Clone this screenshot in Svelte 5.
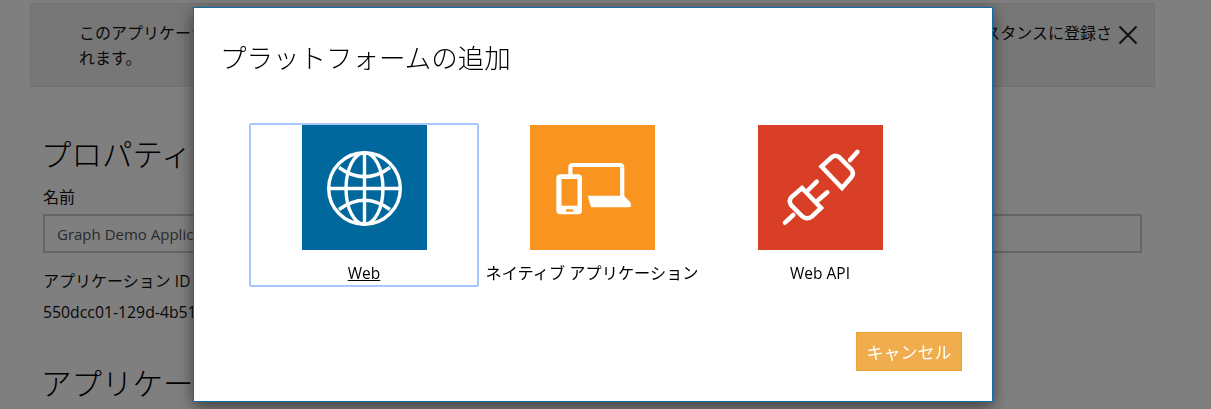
<script>
  const platforms = [
    { name: 'Web', cls: 'web', focused: true },
    { name: 'ネイティブ アプリケーション', cls: 'native' },
    { name: 'Web API', cls: 'api' }
  ]
</script>

<div class="page">
  <div class="alert">
    <p>このアプリケーションは、アプリケーションを追加したすべてのユーザーが所属している組織内の Azure Active Directory インスタンスに登録されます。</p>
    <svg class="close" viewBox="0 0 20 20" width="20" height="20" aria-hidden="true">
      <path d="M1.500 1.500 18.500 18.500M18.500 1.500 1.500 18.500" />
    </svg>
  </div>

  <section class="props">
    <h2>プロパティ</h2>
    <label for="name">名前</label>
    <input id="name" type="text" value="Graph Demo Application" />
    <div class="field-label">アプリケーション <span class="latin">ID</span></div>
    <div class="field-value">550dcc01-129d-4b51-a6f2-7c3e90d1b884</div>
    <h2 class="second">アプリケーション シークレット</h2>
  </section>
</div>

<div class="overlay">
  <div class="modal">
    <h3>プラットフォームの追加</h3>

    <div class="tiles">
      {#each platforms as p}
        <a class="tile" class:focused={p.focused} href="#top">
          <span class="icon {p.cls}">
            {#if p.cls === 'web'}
              <svg viewBox="0 0 125 125" width="125" height="125" fill="none" stroke="#fff" stroke-width="3.400">
                <circle cx="62.500" cy="63.500" r="35.800" />
                <ellipse cx="62.500" cy="63.500" rx="18.500" ry="35.800" />
                <path d="M62.500 27.700V99.300M26.700 63.500H98.300" />
                <path d="M37 42.500Q62.500 61 88 42.500" />
                <path d="M37 84.500Q62.500 66 88 84.500" />
              </svg>
            {:else if p.cls === 'native'}
              <svg viewBox="0 0 125 125" width="125" height="125">
                <path d="M40.400 50V42.300Q40.400 40 42.700 40H90Q92.200 40 92.200 42.300V72" fill="none" stroke="#fff" stroke-width="4.200" />
                <rect x="26.300" y="49.300" width="25.700" height="40" rx="4" fill="#fff" />
                <rect x="31.500" y="54" width="16" height="26.700" fill="#fa9421" />
                <rect x="36" y="84.300" width="7.300" height="2.400" fill="#fa9421" />
                <path d="M57.700 70.700H94L100.500 77.500Q102 82.300 99 82.300H61Z" fill="#fff" />
              </svg>
            {:else}
              <svg viewBox="0 0 125 125" width="125" height="125" fill="none" stroke="#fff" stroke-width="4.500" stroke-linecap="round" stroke-linejoin="miter">
                <path d="M63.500 41.500 84 63 93.500 52Q96.500 48 93 44L81 32Q77 29.500 74 32Z" />
                <path d="M92 35 99.300 27" />
                <path d="M44 63 63 83 54 91.500Q49 95 44.500 91.500L33.500 80.500Q30 76 33.500 72Z" />
                <path d="M50.300 65 58.700 56.700M60.300 75 69.300 67.300M35.300 90 27 97.700" />
              </svg>
            {/if}
          </span>
          <span class="name" class:latin={p.cls !== 'native'}>{p.name}</span>
        </a>
      {/each}
    </div>

    <div class="actions">
      <button type="button">キャンセル</button>
    </div>
  </div>
</div>

<style>
  :global(body) {
    margin: 0;
    height: 409px;
    overflow: hidden;
    background: #fff;
    color: #000;
    font-family: "Open Sans", "Noto Sans CJK JP", sans-serif;
    font-size: 16px;
  }

  .latin {
    font-size: 15.500px;
  }

  .page {
    padding: 3px 56px 0 30px;
  }

  .alert {
    display: flex;
    align-items: flex-start;
    gap: 5px;
    height: 84px;
    box-sizing: border-box;
    padding: 17px 16px 0 48px;
    background: #eee;
    border: 1px solid #e5e5e5;
    color: #111;
    line-height: 25px;
  }

  .alert p {
    margin: 0;
    flex: 1;
  }

  .close {
    flex: none;
    margin-top: 4px;
  }

  .close path {
    fill: none;
    stroke: #222;
    stroke-width: 2;
  }

  .props {
    padding: 0 13px;
  }

  h2 {
    margin: 47px 0 0 -2px;
    font-size: 30.500px;
    font-weight: 300;
    line-height: 40px;
    color: #000;
    white-space: nowrap;
  }

  .second {
    margin-top: 41px;
  }

  label {
    display: block;
    margin-top: 13px;
    line-height: 20px;
    color: #111;
  }

  input {
    display: block;
    width: 100%;
    height: 39px;
    box-sizing: border-box;
    margin-top: 7px;
    padding: 0 12px;
    border: 2px solid #ccc;
    font: inherit;
    font-size: 15px;
    color: #555;
    background: #fff;
  }

  .field-label {
    margin-top: 18px;
    line-height: 20px;
    color: #111;
  }

  .field-value {
    margin-top: 11px;
    line-height: 20px;
    font-size: 15.800px;
    color: #111;
  }

  .overlay {
    position: fixed;
    inset: 0;
    background: rgba(0, 0, 0, 0.5);
  }

  .modal {
    position: absolute;
    left: 193px;
    top: 7px;
    width: 800px;
    height: 395px;
    box-sizing: border-box;
    display: flex;
    flex-direction: column;
    padding: 30px 30px 30px 28px;
    background: #fff;
    border: 1px solid #0f6ea5;
    box-shadow: 0 5px 15px rgba(0, 0, 0, 0.5);
  }

  h3 {
    margin: 0 0 0 -2px;
    font-size: 26.500px;
    font-weight: 300;
    line-height: 40px;
    color: #000;
  }

  .tiles {
    display: grid;
    grid-template-columns: repeat(3, 228px);
    margin: 45px 0 0 27px;
  }

  .tile {
    display: flex;
    flex-direction: column;
    align-items: center;
    height: 164px;
    color: #000;
    font-size: 16.200px;
    text-decoration: none;
    white-space: nowrap;
    border: 2px solid transparent;
    box-sizing: border-box;
    border-radius: 2px;
    width: 230px;
  }

  .tile.focused {
    border-color: #a8c7fa;
  }

  .tile.focused .name {
    text-decoration: underline;
  }

  .icon {
    display: block;
    width: 125px;
    height: 125px;
    flex: none;
  }

  .icon svg {
    display: block;
  }

  .web { background: #00689d; }
  .native { background: #fa9421; }
  .api { background: #d83f26; }

  .name {
    margin-top: 13px;
    line-height: 20px;
  }

  .actions {
    display: flex;
    justify-content: flex-end;
    margin-top: auto;
  }

  button {
    width: 106px;
    height: 39px;
    padding: 0;
    background: #f0ad4e;
    border: 1px solid #eea236;
    color: #fff;
    font: inherit;
    font-size: 17px;
  }
</style>
